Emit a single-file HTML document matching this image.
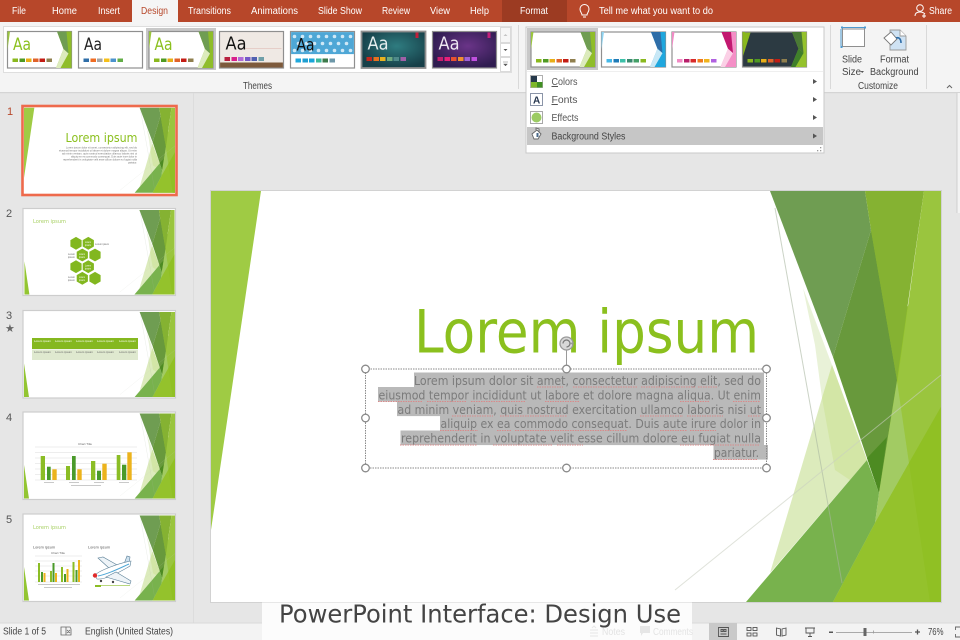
<!DOCTYPE html>
<html><head><meta charset="utf-8"><title>PowerPoint Interface: Design Use</title>
<style>
html,body{margin:0;padding:0;background:#e6e6e6;width:960px;height:640px;overflow:hidden}
svg{display:block}
text{font-family:"Liberation Sans",sans-serif;font-size:10px;fill:#444}
.w{fill:#fff}
.d{font-family:"DejaVu Sans","Liberation Sans",sans-serif}
.b text{font-family:"DejaVu Sans","Liberation Sans",sans-serif;font-size:12px;fill:#7b7b7b}
.sq{fill:none;stroke:#d98a8a;stroke-width:1;stroke-dasharray:1.5 1}
.m{font-size:10px;fill:#555}
</style></head><body>
<svg width="960" height="640" viewBox="0 0 960 640" xmlns="http://www.w3.org/2000/svg">
<defs>
<radialGradient id="teal" cx=".55" cy=".4" r=".6"><stop offset="0" stop-color="#2f7c80"/><stop offset="1" stop-color="#163f48"/></radialGradient>
<radialGradient id="purp" cx=".55" cy=".4" r=".6"><stop offset="0" stop-color="#6a3488"/><stop offset="1" stop-color="#2f1c50"/></radialGradient>
<g id="decor">
<polygon points="871,230 941,375 941,602 833,602 875,523 880,497" fill="#94c22c"/>
<polygon points="803,288 832,365 822,398 815,345" fill="#e9f2d8"/>
<polygon points="832,365 867,460 770,573 822,398" fill="#dcebbc"/>
<polygon points="822,398 832,365 867,460 850,480 835,470" fill="#d3e6a6"/>
<polygon points="770,191 865,191 871,230 833,357" fill="#6f9d52"/>
<polygon points="871,230 897,380 879,493 867,458 833,357" fill="#68993c"/>
<polygon points="867,458 887,437 879,493" fill="#4d8b22"/>
<polygon points="865,191 924,191 897,380 871,230" fill="#85b232"/>
<polygon points="924,191 941,191 941,375 897,385" fill="#9ac53e"/>
<polygon points="941,375 941,407 909,463 897,383" fill="#9ac53e"/>
<polygon points="897,381 909,463 875,523 879,493" fill="#a2cb63"/>
<polygon points="746,602 867,460 879,493 875,523 833,602" fill="#78b24d"/>
<polygon points="833,602 875,523 909,463 941,407 941,602" fill="#94c22c"/>
<polygon points="909,463 941,407 941,602 930,602" fill="#90c024"/>
<line x1="775" y1="208" x2="842" y2="583" stroke="#a9b5a0" stroke-opacity=".6" stroke-width="1"/>
<line x1="675" y1="590" x2="941" y2="375" stroke="#c9cfc2" stroke-opacity=".6" stroke-width="1"/>
</g>
<g id="tail"><polygon points="211,440 211,602 235,602" fill="#93c532"/></g>
<g id="thchev">
<polygon points="0,0 2.500,0 0,18" style="fill:var(--a)"/>
<polygon points="49.500,0 64,0 64,36.500 48.500,36.500 56,17.500" style="fill:var(--b)"/>
<polygon points="49.500,0 59,0 61,22 56,17.500" style="fill:var(--c)"/>
<polygon points="56,17.500 61,22 53,36.500 48.500,36.500" style="fill:var(--d)"/>
</g>
<polygon id="hex" points="0,-6.400 5.600,-3.200 5.600,3.200 0,6.400 -5.600,3.200 -5.600,-3.200" fill="#82b71f"/>
</defs>

<rect width="960" height="640" fill="#e6e6e6"/>

<!-- title bar -->
<rect width="960" height="22" fill="#b7472a"/>
<rect x="502" width="65" height="22" fill="#9c3b22"/>
<rect x="132" width="46" height="23" fill="#f5f5f5"/>
<text class="w" x="12" y="14" textLength="14" lengthAdjust="spacingAndGlyphs">File</text>
<text class="w" x="52" y="14" textLength="25" lengthAdjust="spacingAndGlyphs">Home</text>
<text class="w" x="98" y="14" textLength="22" lengthAdjust="spacingAndGlyphs">Insert</text>
<text x="141" y="14" textLength="27" lengthAdjust="spacingAndGlyphs" style="fill:#b7472a">Design</text>
<text class="w" x="188" y="14" textLength="43" lengthAdjust="spacingAndGlyphs">Transitions</text>
<text class="w" x="251" y="14" textLength="47" lengthAdjust="spacingAndGlyphs">Animations</text>
<text class="w" x="318" y="14" textLength="44" lengthAdjust="spacingAndGlyphs">Slide Show</text>
<text class="w" x="382" y="14" textLength="28" lengthAdjust="spacingAndGlyphs">Review</text>
<text class="w" x="430" y="14" textLength="20" lengthAdjust="spacingAndGlyphs">View</text>
<text class="w" x="470" y="14" textLength="19" lengthAdjust="spacingAndGlyphs">Help</text>
<text class="w" x="520" y="14" textLength="28" lengthAdjust="spacingAndGlyphs">Format</text>
<path d="M582 15c0-2-2-3-2-6a4.500 4.500 0 0 1 9 0c0 3-2 4-2 6zM583 17h3" fill="none" stroke="#fff" stroke-width="1"/>
<text class="w" x="599" y="14" textLength="114" lengthAdjust="spacingAndGlyphs">Tell me what you want to do</text>
<circle cx="920" cy="8" r="3.300" fill="none" stroke="#fff"/>
<path d="M915 16c0-3 2-4 5-4s4 1 5 2M924 14v4M922 16h4" fill="none" stroke="#fff"/>
<text class="w" x="929" y="14" textLength="23" lengthAdjust="spacingAndGlyphs">Share</text>

<!-- ribbon -->
<rect y="22" width="960" height="71" fill="#f4f4f4"/>
<rect x="132" y="21" width="46" height="3" fill="#f5f5f5"/>
<rect y="92" width="960" height="1.200" fill="#d4d4d4"/>
<rect x="3.500" y="26.500" width="508" height="46" fill="#fff" stroke="#dedede"/>
<rect x="146" y="28" width="70" height="42" fill="#c8c8c8"/>
<g stroke="#dadada" fill="#f6f6f6"><rect x="500.500" y="27.500" width="10" height="15"/><rect x="500.500" y="43.500" width="10" height="13" fill="#fff"/><rect x="500.500" y="57.500" width="10" height="14" fill="#fff"/></g>
<path d="M503.500 36l2-2 2 2z" fill="#c4c4c4"/><path d="M503.500 49h4l-2 2z" fill="#555"/><path d="M503 62h5M503.500 64h4l-2 2z" fill="#555" stroke="#777" stroke-width=".5"/>

<!-- theme 1 -->
<g transform="translate(7.500 31.500)" style="--a:#9ac53e;--b:#8fbd2a;--c:#6f9d52;--d:#dcebbc">
<rect width="64" height="36.500" fill="#fff" stroke="#8f8f8f" stroke-width="1.200"/><use href="#thchev"/>
<text x="5.500" y="18.500" class="d" textLength="18" lengthAdjust="spacingAndGlyphs" style="font-size:17px;fill:#8bc01e">Aa</text>
<g><rect x="5" y="27" width="5.500" height="3.500" fill="#8ab81e"/><rect x="12" y="27" width="5.500" height="3.500" fill="#4f9a22"/><rect x="18.500" y="27" width="5.500" height="3.500" fill="#e8ae17"/><rect x="25.500" y="27" width="5.500" height="3.500" fill="#e0622a"/><rect x="32" y="27" width="5.500" height="3.500" fill="#c31c14"/><rect x="39" y="27" width="5.500" height="3.500" fill="#8f7f4e"/></g></g>
<!-- theme 2 -->
<g transform="translate(78.500 31.500)">
<rect width="64" height="36.500" fill="#fff" stroke="#8f8f8f" stroke-width="1.200"/>
<text x="5.500" y="18.500" class="d" textLength="18" lengthAdjust="spacingAndGlyphs" style="font-size:17px;fill:#222">Aa</text>
<rect x="5" y="27" width="5.500" height="3.500" fill="#2f6ea8"/><rect x="12" y="27" width="5.500" height="3.500" fill="#ef6c23"/><rect x="18.500" y="27" width="5.500" height="3.500" fill="#a5a5a5"/><rect x="25.500" y="27" width="5.500" height="3.500" fill="#f5bf1a"/><rect x="32" y="27" width="5.500" height="3.500" fill="#4b93cd"/><rect x="39" y="27" width="5.500" height="3.500" fill="#63ae47"/></g>
<!-- theme 3 -->
<g transform="translate(149 31.500)" style="--a:#9ac53e;--b:#8fbd2a;--c:#6f9d52;--d:#dcebbc">
<rect width="64" height="36.500" fill="#fff" stroke="#8f8f8f" stroke-width="1.200"/><use href="#thchev"/>
<text x="5.500" y="18.500" class="d" textLength="18" lengthAdjust="spacingAndGlyphs" style="font-size:17px;fill:#8bc01e">Aa</text>
<rect x="5" y="27" width="5.500" height="3.500" fill="#8ab81e"/><rect x="12" y="27" width="5.500" height="3.500" fill="#4f9a22"/><rect x="18.500" y="27" width="5.500" height="3.500" fill="#e8ae17"/><rect x="25.500" y="27" width="5.500" height="3.500" fill="#e0622a"/><rect x="32" y="27" width="5.500" height="3.500" fill="#c31c14"/><rect x="39" y="27" width="5.500" height="3.500" fill="#8f7f4e"/></g>
<!-- theme 4 -->
<g transform="translate(219.500 31.500)">
<rect width="64" height="36.500" fill="#efe9e4" stroke="#8f8f8f" stroke-width="1.200"/>
<rect x=".6" y="31" width="62.800" height="5" fill="#7d5a3c"/>
<line x1="24" y1="17" x2="62" y2="17" stroke="#e3c4bf" stroke-width=".7"/>
<text x="6" y="18" class="d" textLength="21" lengthAdjust="spacingAndGlyphs" style="font-size:18px;fill:#111">Aa</text>
<rect x="5" y="25.500" width="5.500" height="4" fill="#b81f3e"/><rect x="12" y="25.500" width="5.500" height="4" fill="#d91f8a"/><rect x="18.500" y="25.500" width="5.500" height="4" fill="#b06ad8"/><rect x="25.500" y="25.500" width="5.500" height="4" fill="#7458c8"/><rect x="32" y="25.500" width="5.500" height="4" fill="#5060b0"/><rect x="39" y="25.500" width="5.500" height="4" fill="#6f9fa8"/></g>
<!-- theme 5 -->
<g transform="translate(290.500 31.500)">
<rect width="64" height="36.500" fill="#fff" stroke="#8f8f8f" stroke-width="1.200"/>
<rect x=".6" y=".6" width="62.800" height="22" fill="#4ea7d6"/>
<g fill="#cfe8f6"><circle cx="4" cy="5" r="1.800"/><circle cx="12" cy="5" r="1.800"/><circle cx="20" cy="5" r="1.800"/><circle cx="28" cy="5" r="1.800"/><circle cx="36" cy="5" r="1.800"/><circle cx="44" cy="5" r="1.800"/><circle cx="52" cy="5" r="1.800"/><circle cx="60" cy="5" r="1.800"/><circle cx="8" cy="12" r="1.800"/><circle cx="16" cy="12" r="1.800"/><circle cx="24" cy="12" r="1.800"/><circle cx="32" cy="12" r="1.800"/><circle cx="40" cy="12" r="1.800"/><circle cx="48" cy="12" r="1.800"/><circle cx="56" cy="12" r="1.800"/><circle cx="4" cy="19" r="1.800"/><circle cx="12" cy="19" r="1.800"/><circle cx="20" cy="19" r="1.800"/><circle cx="28" cy="19" r="1.800"/><circle cx="36" cy="19" r="1.800"/><circle cx="44" cy="19" r="1.800"/><circle cx="52" cy="19" r="1.800"/><circle cx="60" cy="19" r="1.800"/></g>
<text x="6" y="19" class="d" textLength="18" lengthAdjust="spacingAndGlyphs" style="font-size:17px;fill:#111">Aa</text>
<rect x="5" y="27" width="5.500" height="4" fill="#1fa8dc"/><rect x="12" y="27" width="5.500" height="4" fill="#1f9ed0"/><rect x="18.500" y="27" width="5.500" height="4" fill="#19a5d9"/><rect x="25.500" y="27" width="5.500" height="4" fill="#3cb89a"/><rect x="32" y="27" width="5.500" height="4" fill="#3d7a4a"/><rect x="39" y="27" width="5.500" height="4" fill="#6d97a8"/></g>
<!-- theme 6 -->
<g transform="translate(361.500 31.500)">
<rect width="64" height="36.500" fill="url(#teal)" stroke="#8f8f8f" stroke-width="1.800"/>
<rect x="54" y="1" width="3" height="5.500" fill="#c21f3a"/>
<text x="6" y="18" class="d" textLength="21" lengthAdjust="spacingAndGlyphs" style="font-size:18px;fill:#e6eeee">Aa</text>
<rect x="5" y="25.500" width="5.500" height="4" fill="#c4281e"/><rect x="12" y="25.500" width="5.500" height="4" fill="#e8701e"/><rect x="18.500" y="25.500" width="5.500" height="4" fill="#e8b21e"/><rect x="25.500" y="25.500" width="5.500" height="4" fill="#6faa80"/><rect x="32" y="25.500" width="5.500" height="4" fill="#4f8a8a"/><rect x="39" y="25.500" width="5.500" height="4" fill="#a060a8"/></g>
<!-- theme 7 -->
<g transform="translate(432.500 31.500)">
<rect width="64" height="36.500" fill="url(#purp)" stroke="#8f8f8f" stroke-width="1.200"/>
<rect x="55" y="1" width="3" height="5.500" fill="#c2207a"/>
<text x="6" y="18" class="d" textLength="21" lengthAdjust="spacingAndGlyphs" style="font-size:18px;fill:#eee8f2">Aa</text>
<rect x="5" y="25.500" width="5.500" height="4" fill="#c61f6e"/><rect x="12" y="25.500" width="5.500" height="4" fill="#e81f7a"/><rect x="18.500" y="25.500" width="5.500" height="4" fill="#e85030"/><rect x="25.500" y="25.500" width="5.500" height="4" fill="#f09030"/><rect x="32" y="25.500" width="5.500" height="4" fill="#a060d8"/><rect x="39" y="25.500" width="5.500" height="4" fill="#c050e0"/></g>
<text x="243" y="89" textLength="29" lengthAdjust="spacingAndGlyphs" style="fill:#444">Themes</text>

<rect x="518" y="25" width="1" height="64" fill="#d9d9d9"/>
<rect x="830" y="25" width="1" height="64" fill="#d9d9d9"/>
<rect x="926" y="25" width="1" height="64" fill="#d9d9d9"/>

<!-- dropdown panel -->
<rect x="526" y="27" width="298" height="126" fill="#fff" stroke="#c9c9c9"/>
<rect x="527" y="28" width="71" height="42" fill="#c8c8c8"/>
<rect x="527" y="71" width="296" height="1" fill="#efefef"/>
<g transform="translate(531 32)" style="--a:#9ac53e;--b:#8fbd2a;--c:#6f9d52;--d:#dcebbc">
<rect width="64" height="35" fill="#fff" stroke="#8f8f8f" stroke-width="1.200"/><use href="#thchev" transform="scale(1 .96)"/>
<rect x="5" y="27" width="5.500" height="3.500" fill="#8ab81e"/><rect x="12" y="27" width="5.500" height="3.500" fill="#4f9a22"/><rect x="18.500" y="27" width="5.500" height="3.500" fill="#e8ae17"/><rect x="25.500" y="27" width="5.500" height="3.500" fill="#e0622a"/><rect x="32" y="27" width="5.500" height="3.500" fill="#c31c14"/><rect x="39" y="27" width="5.500" height="3.500" fill="#8f7f4e"/></g>
<g transform="translate(601.500 32)" style="--a:#8fd3f0;--b:#1fa7de;--c:#2f6ea8;--d:#c8e8f6">
<rect width="64" height="35" fill="#fff" stroke="#8f8f8f" stroke-width="1.200"/><use href="#thchev" transform="scale(1 .96)"/>
<rect x="5" y="27" width="5.500" height="3.500" fill="#45b8e8"/><rect x="12" y="27" width="5.500" height="3.500" fill="#1f7cb8"/><rect x="18.500" y="27" width="5.500" height="3.500" fill="#3cc0a8"/><rect x="25.500" y="27" width="5.500" height="3.500" fill="#3a8a70"/><rect x="32" y="27" width="5.500" height="3.500" fill="#45a068"/><rect x="39" y="27" width="5.500" height="3.500" fill="#8ab81e"/></g>
<g transform="translate(672 32)" style="--a:#f08ac4;--b:#f48fc6;--c:#c2186f;--d:#fbd0e6">
<rect width="64" height="35" fill="#fff" stroke="#8f8f8f" stroke-width="1.200"/><use href="#thchev" transform="scale(1 .96)"/>
<rect x="5" y="27" width="5.500" height="3.500" fill="#f28ac4"/><rect x="12" y="27" width="5.500" height="3.500" fill="#b81f6a"/><rect x="18.500" y="27" width="5.500" height="3.500" fill="#d92a2a"/><rect x="25.500" y="27" width="5.500" height="3.500" fill="#f07a1e"/><rect x="32" y="27" width="5.500" height="3.500" fill="#f0b41e"/><rect x="39" y="27" width="5.500" height="3.500" fill="#b060e0"/></g>
<g transform="translate(742.500 32)" style="--a:#8ab81e;--b:#94c22c;--c:#4a7a35;--d:#3f7f2a">
<rect width="64" height="35" fill="#2c3a42" stroke="#8f8f8f" stroke-width="1.200"/><polygon points=".6,.6 8,.6 .6,24" fill="#8ab81e"/><use href="#thchev" transform="scale(1 .96)"/>
<rect x="5" y="27" width="5.500" height="3.500" fill="#8ab81e"/><rect x="12" y="27" width="5.500" height="3.500" fill="#4f9a22"/><rect x="18.500" y="27" width="5.500" height="3.500" fill="#e8ae17"/><rect x="25.500" y="27" width="5.500" height="3.500" fill="#e0622a"/><rect x="32" y="27" width="5.500" height="3.500" fill="#c31c14"/><rect x="39" y="27" width="5.500" height="3.500" fill="#8f7f4e"/></g>
<rect x="527" y="127" width="296" height="18" fill="#c6c6c6"/>
<text class="m" x="551.500" y="85" textLength="26" lengthAdjust="spacingAndGlyphs"><tspan text-decoration="underline">C</tspan>olors</text>
<text class="m" x="551.500" y="103" textLength="26" lengthAdjust="spacingAndGlyphs"><tspan text-decoration="underline">F</tspan>onts</text>
<text class="m" x="551.500" y="121" textLength="27" lengthAdjust="spacingAndGlyphs">Effects</text>
<text class="m" x="551.500" y="139.500" textLength="74" lengthAdjust="spacingAndGlyphs" style="fill:#444">Background Styles</text>
<g fill="#555"><path d="M813 79l4 2.500-4 2.500z"/><path d="M813 97l4 2.500-4 2.500z"/><path d="M813 115l4 2.500-4 2.500z"/><path d="M813 133.500l4 2.500-4 2.500z"/></g>
<g fill="#999"><rect x="820" y="147" width="1.300" height="1.300"/><rect x="820" y="150" width="1.300" height="1.300"/><rect x="817" y="150" width="1.300" height="1.300"/></g>
<!-- menu icons -->
<rect x="530.500" y="75.500" width="12" height="12" fill="#fff" stroke="#b0b0b0"/>
<rect x="531" y="76" width="6" height="6" fill="#25384a"/><rect x="531" y="82" width="6" height="5.500" fill="#7fb82a"/><rect x="537" y="82" width="5.500" height="5.500" fill="#3f8f22"/>
<rect x="530.500" y="93.500" width="12" height="12" fill="#fff" stroke="#8b95a8"/>
<text x="533" y="103.500" style="font-size:10px;font-weight:bold;fill:#26364e">A</text>
<rect x="530.500" y="111.500" width="12" height="12" fill="#fff" stroke="#a8a8a8"/>
<circle cx="536.500" cy="117.500" r="5" fill="#9ccb63"/>
<path d="M532 134l5-4 4 4-3 5h-4zM536 130v-2l3 1v3" fill="#fff" stroke="#666" stroke-width=".9"/><rect x="536.500" y="133" width="2" height="4" fill="#4a6a8a"/>

<!-- customize -->
<rect x="842.500" y="29" width="22" height="17.500" fill="#fff" stroke="#8f8f8f"/>
<path d="M842 27.500h23M841 29v18" stroke="#4d9ad0" stroke-width="1" fill="none"/>
<g fill="#4d9ad0"><rect x="841" y="26.500" width="2" height="2"/><rect x="864" y="26.500" width="2" height="2"/><rect x="840.500" y="46" width="2" height="2"/></g>
<text x="842" y="62.500" textLength="20" lengthAdjust="spacingAndGlyphs">Slide</text>
<text x="842" y="75" textLength="19" lengthAdjust="spacingAndGlyphs">Size</text>
<path d="M860.500 71h3.500l-1.800 2z" fill="#555"/>
<path d="M890 30h10l6 6v14h-16z" fill="#cfe2f3" stroke="#9a9a9a" stroke-width=".9"/><path d="M900 30v6h6" fill="#fff" stroke="#9a9a9a" stroke-width=".9"/>
<path d="M884 38l7-6 6 7-6 6z" fill="#fff" stroke="#777" stroke-width=".9"/>
<path d="M896 38c3-1 5 1 5 5" fill="none" stroke="#2f6ea8" stroke-width="1.600"/>
<text x="880" y="62.500" textLength="29" lengthAdjust="spacingAndGlyphs">Format</text>
<text x="870" y="75" textLength="48.500" lengthAdjust="spacingAndGlyphs">Background</text>
<text x="858" y="89" textLength="40" lengthAdjust="spacingAndGlyphs">Customize</text>
<path d="M947 88l2.500-2.500 2.500 2.500" fill="none" stroke="#666"/>

<!-- panes -->
<rect x="193" y="93" width="1" height="530" fill="#dcdcdc"/>
<rect x="957" y="93" width="3" height="120" fill="#f4f4f4"/>
<rect x="956.500" y="93" width="1" height="120" fill="#cfcfcf"/>

<!-- main slide -->
<rect x="210.500" y="190.500" width="731" height="412" fill="#fff" stroke="#d2d2d2"/>
<use href="#decor"/>
<polygon points="211,191 261,191 211,530" fill="#9fcb44"/>
<text class="d" x="414" y="352.500" textLength="345" lengthAdjust="spacingAndGlyphs" style="font-size:60px;fill:#8bc01e">Lorem ipsum</text>

<g fill="#b9b9b9">
<rect x="414" y="372.500" width="350" height="14.800"/>
<rect x="378" y="387" width="386" height="14.600"/>
<rect x="397" y="401.500" width="367" height="14.600"/>
<rect x="440" y="416" width="324" height="14.600"/>
<rect x="400.500" y="430.500" width="363.500" height="14.600"/>
<rect x="713.500" y="445" width="54.500" height="14.600"/>
</g>
<g class="b">
<text x="414" y="385" textLength="347" lengthAdjust="spacingAndGlyphs">Lorem ipsum dolor sit amet, consectetur adipiscing elit, sed do</text>
<text x="378.500" y="399.400" textLength="382.500" lengthAdjust="spacingAndGlyphs">eiusmod tempor incididunt ut labore et dolore magna aliqua. Ut enim</text>
<text x="397.500" y="413.800" textLength="363.500" lengthAdjust="spacingAndGlyphs">ad minim veniam, quis nostrud exercitation ullamco laboris nisi ut</text>
<text x="440.500" y="428.200" textLength="320.500" lengthAdjust="spacingAndGlyphs">aliquip ex ea commodo consequat. Duis aute irure dolor in</text>
<text x="401" y="442.600" textLength="360" lengthAdjust="spacingAndGlyphs">reprehenderit in voluptate velit esse cillum dolore eu fugiat nulla</text>
<text x="714" y="457" textLength="45" lengthAdjust="spacingAndGlyphs">pariatur.</text>
</g>
<path class="sq" d="M537 387h26M573 387h64M641 387h54M698 387h19M378 401.500h45M427 401.500h40M471 401.500h54M545 401.500h35M680 401.500h30M733 401.500h27M452 416h41M500 416h67M640 416h43M687 416h36M748 416h12M440 430.500h38M497 430.500h15M515 430.500h112M660 430.500h27M690 430.500h26M400 445h77M493 445h60M557 445h26M680 445h80M713 459.500h45"/>

<rect x="365.500" y="369" width="401" height="99" fill="none" stroke="#8a8a8a" stroke-width="1" stroke-dasharray="1.500 1"/>
<line x1="566.500" y1="350" x2="566.500" y2="369" stroke="#9a9a9a"/>
<circle cx="566.500" cy="343.500" r="6.500" fill="#d8d8d8" stroke="#9a9a9a" stroke-width="1.300"/>
<path d="M563 343.500a3.500 3.500 0 1 1 3.500 3.500" fill="none" stroke="#777" stroke-width="1.200"/><path d="M570 343l4-1-1.500 3z" fill="#999"/>
<g fill="#fff" stroke="#8a8a8a" stroke-width="1.300">
<circle cx="365.500" cy="369" r="3.800"/><circle cx="566.500" cy="369" r="3.800"/><circle cx="766.500" cy="369" r="3.800"/>
<circle cx="365.500" cy="418" r="3.800"/><circle cx="766.500" cy="418" r="3.800"/>
<circle cx="365.500" cy="468" r="3.800"/><circle cx="566.500" cy="468" r="3.800"/><circle cx="766.500" cy="468" r="3.800"/>
</g>

<!-- thumbnails -->
<text x="7" y="115" style="font-size:11px;fill:#b7472a">1</text>
<text x="6" y="217" style="font-size:11px;fill:#555">2</text>
<text x="6" y="319" style="font-size:11px;fill:#555">3</text>
<text x="5" y="332" style="font-size:11px;fill:#666">★</text>
<text x="6" y="421" style="font-size:11px;fill:#555">4</text>
<text x="6" y="523" style="font-size:11px;fill:#555">5</text>

<rect x="22.500" y="106" width="154" height="89" fill="#fff" stroke="#ee6a4c" stroke-width="2.600"/>
<svg x="24" y="107.500" width="151" height="85.500" viewBox="211 191 730 411"><use href="#decor"/><polygon points="211,191 261,191 211,530" fill="#9fcb44"/></svg>
<text class="d" x="65.500" y="142" textLength="72" lengthAdjust="spacingAndGlyphs" style="font-size:12.500px;fill:#8bc01e">Lorem ipsum</text>
<g class="d">
<text x="66" y="148.500" textLength="71" lengthAdjust="spacingAndGlyphs" style="font-size:2.600px;fill:#777">Lorem ipsum dolor sit amet, consectetur adipiscing elit, sed do</text>
<text x="59" y="151.500" textLength="78" lengthAdjust="spacingAndGlyphs" style="font-size:2.600px;fill:#777">eiusmod tempor incididunt ut labore et dolore magna aliqua. Ut enim</text>
<text x="62" y="154.500" textLength="75" lengthAdjust="spacingAndGlyphs" style="font-size:2.600px;fill:#777">ad minim veniam, quis nostrud exercitation ullamco laboris nisi ut</text>
<text x="71" y="157.500" textLength="66" lengthAdjust="spacingAndGlyphs" style="font-size:2.600px;fill:#777">aliquip ex ea commodo consequat. Duis aute irure dolor in</text>
<text x="63" y="160.500" textLength="74" lengthAdjust="spacingAndGlyphs" style="font-size:2.600px;fill:#777">reprehenderit in voluptate velit esse cillum dolore eu fugiat nulla</text>
<text x="128" y="163.500" textLength="9" lengthAdjust="spacingAndGlyphs" style="font-size:2.600px;fill:#777">pariatur.</text>
</g>

<!-- thumb 2 -->
<rect x="23" y="208.500" width="152.500" height="87" fill="#fff" stroke="#cdcdcd" stroke-width="1.200"/>
<svg x="24" y="210" width="151" height="84.500" viewBox="211 191 730 411"><use href="#decor"/><use href="#tail"/></svg>
<text class="d" x="33" y="223" textLength="33" lengthAdjust="spacingAndGlyphs" style="font-size:5.500px;fill:#a8d064">Lorem ipsum</text>
<use href="#hex" x="76" y="243.300"/><use href="#hex" x="88.300" y="243.300"/><use href="#hex" x="82.300" y="255"/><use href="#hex" x="95" y="255"/><use href="#hex" x="76" y="266.700"/><use href="#hex" x="88.300" y="266.700"/><use href="#hex" x="82.300" y="278.300"/><use href="#hex" x="95" y="278.300"/>
<text x="85" y="243" textLength="6" lengthAdjust="spacingAndGlyphs" style="font-size:2.500px;fill:#fff">Lorem</text>
<text x="85" y="246" textLength="6" lengthAdjust="spacingAndGlyphs" style="font-size:2.500px;fill:#fff">ipsum</text>
<text x="79" y="255" textLength="6" lengthAdjust="spacingAndGlyphs" style="font-size:2.500px;fill:#fff">Lorem</text>
<text x="79" y="258" textLength="6" lengthAdjust="spacingAndGlyphs" style="font-size:2.500px;fill:#fff">ipsum</text>
<text x="85" y="266.500" textLength="6" lengthAdjust="spacingAndGlyphs" style="font-size:2.500px;fill:#fff">Lorem</text>
<text x="85" y="269.500" textLength="6" lengthAdjust="spacingAndGlyphs" style="font-size:2.500px;fill:#fff">ipsum</text>
<text x="79" y="278" textLength="6" lengthAdjust="spacingAndGlyphs" style="font-size:2.500px;fill:#fff">Lorem</text>
<text x="79" y="281" textLength="6" lengthAdjust="spacingAndGlyphs" style="font-size:2.500px;fill:#fff">ipsum</text>
<text x="95" y="245" textLength="14" lengthAdjust="spacingAndGlyphs" style="font-size:3px;fill:#666">Lorem ipsum</text>
<text x="68" y="255" textLength="7" lengthAdjust="spacingAndGlyphs" style="font-size:3px;fill:#666">Lorem</text>
<text x="68" y="258" textLength="7" lengthAdjust="spacingAndGlyphs" style="font-size:3px;fill:#666">ipsum</text>
<text x="68" y="278" textLength="7" lengthAdjust="spacingAndGlyphs" style="font-size:3px;fill:#666">Lorem</text>
<text x="68" y="281" textLength="7" lengthAdjust="spacingAndGlyphs" style="font-size:3px;fill:#666">ipsum</text>

<!-- thumb 3 -->
<rect x="23" y="310.500" width="152.500" height="87.500" fill="#fff" stroke="#cdcdcd" stroke-width="1.200"/>
<svg x="24" y="312" width="151" height="85" viewBox="211 191 730 411"><use href="#decor"/><use href="#tail"/></svg>
<rect x="32" y="338" width="106" height="11" fill="#85b81f"/>
<rect x="32" y="349.500" width="106" height="10.500" fill="#dfe9cf"/>
<text x="34" y="342" textLength="17" lengthAdjust="spacingAndGlyphs" style="font-size:3px;fill:#fff">Lorem ipsum</text><text x="55" y="342" textLength="17" lengthAdjust="spacingAndGlyphs" style="font-size:3px;fill:#fff">Lorem ipsum</text><text x="76" y="342" textLength="17" lengthAdjust="spacingAndGlyphs" style="font-size:3px;fill:#fff">Lorem ipsum</text><text x="97" y="342" textLength="17" lengthAdjust="spacingAndGlyphs" style="font-size:3px;fill:#fff">Lorem ipsum</text><text x="119" y="342" textLength="17" lengthAdjust="spacingAndGlyphs" style="font-size:3px;fill:#fff">Lorem ipsum</text>
<text x="34" y="353" textLength="17" lengthAdjust="spacingAndGlyphs" style="font-size:3px;fill:#666">Lorem ipsum</text><text x="55" y="353" textLength="17" lengthAdjust="spacingAndGlyphs" style="font-size:3px;fill:#666">Lorem ipsum</text><text x="76" y="353" textLength="17" lengthAdjust="spacingAndGlyphs" style="font-size:3px;fill:#666">Lorem ipsum</text><text x="97" y="353" textLength="17" lengthAdjust="spacingAndGlyphs" style="font-size:3px;fill:#666">Lorem ipsum</text><text x="119" y="353" textLength="17" lengthAdjust="spacingAndGlyphs" style="font-size:3px;fill:#666">Lorem ipsum</text>

<!-- thumb 4 -->
<rect x="23" y="412" width="152.500" height="87.500" fill="#fff" stroke="#cdcdcd" stroke-width="1.200"/>
<svg x="24" y="413.500" width="151" height="85" viewBox="211 191 730 411"><use href="#decor"/><use href="#tail"/></svg>
<text x="78" y="445" textLength="14" lengthAdjust="spacingAndGlyphs" style="font-size:3px;fill:#666">Chart Title</text>
<g stroke="#dcdcdc" stroke-width=".6"><line x1="35" y1="447" x2="137" y2="447"/><line x1="35" y1="452.500" x2="137" y2="452.500"/><line x1="35" y1="458" x2="137" y2="458"/><line x1="35" y1="463.500" x2="137" y2="463.500"/><line x1="35" y1="469" x2="137" y2="469"/><line x1="35" y1="474.500" x2="137" y2="474.500"/><line x1="35" y1="480" x2="137" y2="480"/></g>
<g fill="#8bbd25"><rect x="40.700" y="456" width="4.300" height="24"/><rect x="66" y="466" width="4" height="14"/><rect x="91" y="461" width="4.300" height="19"/><rect x="116.700" y="455" width="3.700" height="25"/></g>
<g fill="#4a9a2a"><rect x="47" y="466.700" width="3.700" height="13.300"/><rect x="72" y="456" width="3.700" height="24"/><rect x="97" y="470.700" width="4" height="9.300"/><rect x="122" y="464.700" width="4.300" height="15.300"/></g>
<g fill="#ecb31c"><rect x="52.300" y="469.300" width="4.400" height="10.700"/><rect x="77.300" y="469.300" width="4.400" height="10.700"/><rect x="102.300" y="463.700" width="4.400" height="16.300"/><rect x="127.300" y="452.300" width="4.400" height="27.700"/></g>
<g fill="#c9c9c9"><rect x="44" y="482" width="10" height="1"/><rect x="69" y="482" width="10" height="1"/><rect x="94" y="482" width="10" height="1"/><rect x="119" y="482" width="10" height="1"/><rect x="71" y="485" width="30" height="1"/></g>

<!-- thumb 5 -->
<rect x="23" y="514" width="152.500" height="87.500" fill="#fff" stroke="#cdcdcd" stroke-width="1.200"/>
<svg x="24" y="515.500" width="151" height="85" viewBox="211 191 730 411"><use href="#decor"/><use href="#tail"/></svg>
<text class="d" x="33" y="529" textLength="33" lengthAdjust="spacingAndGlyphs" style="font-size:5.500px;fill:#a8d064">Lorem ipsum</text>
<text x="33" y="548.500" textLength="22" lengthAdjust="spacingAndGlyphs" style="font-size:4px;fill:#555">Lorem ipsum</text>
<text x="88" y="548.500" textLength="22" lengthAdjust="spacingAndGlyphs" style="font-size:4px;fill:#555">Lorem ipsum</text>
<text x="51" y="554" textLength="14" lengthAdjust="spacingAndGlyphs" style="font-size:3px;fill:#666">Chart Title</text>
<g stroke="#dcdcdc" stroke-width=".6"><line x1="35" y1="556" x2="82" y2="556"/><line x1="35" y1="561" x2="82" y2="561"/><line x1="35" y1="566" x2="82" y2="566"/><line x1="35" y1="571" x2="82" y2="571"/><line x1="35" y1="576" x2="82" y2="576"/><line x1="35" y1="582" x2="82" y2="582"/></g>
<g fill="#8bbd25"><rect x="38" y="563" width="2" height="19"/><rect x="50" y="571" width="2" height="11"/><rect x="61" y="567" width="2" height="15"/><rect x="72.500" y="562" width="2" height="20"/></g>
<g fill="#4a9a2a"><rect x="41" y="572" width="2" height="10"/><rect x="52.500" y="563" width="2" height="19"/><rect x="64" y="574" width="2" height="8"/><rect x="75.500" y="570" width="2" height="12"/></g>
<g fill="#ecb31c"><rect x="43.500" y="573" width="2" height="9"/><rect x="55" y="573" width="2" height="9"/><rect x="66.500" y="569" width="2" height="13"/><rect x="78" y="560" width="2" height="22"/></g>
<g fill="#c9c9c9"><rect x="38" y="584" width="42" height="1"/><rect x="44" y="587" width="28" height="1"/></g>
<!-- plane -->
<g stroke="#5a7f96" stroke-width=".6" fill="#eef4f8">
<path d="M110 569L98 558l5-1 16 9z"/>
<path d="M124 564l3-8 3 1-1 7z" fill="#cfe2f0"/>
<path d="M95 575C100 570 120 563 131 561l-1 5C120 572 105 580 97 579z" fill="#fff"/>
<path d="M106 577l24 7 1-3-15-9z"/>
</g>
<path d="M98 576c10-2 20-7 31-12" fill="none" stroke="#4ea7d6" stroke-width="1"/>
<circle cx="95" cy="575.500" r="2.200" fill="#e02a2a"/><circle cx="101" cy="581" r="1.200" fill="#444"/><circle cx="113" cy="582" r="1.200" fill="#444"/>
<rect x="95" y="585" width="35" height="1" fill="#b9d77f"/><rect x="95" y="585" width="6" height="2" fill="#8bbd25"/>

<!-- status bar -->
<rect y="623" width="960" height="17" fill="#f3f3f3"/>
<rect y="622.500" width="960" height="1" fill="#d9d9d9"/>
<text x="3" y="634.500" textLength="43" lengthAdjust="spacingAndGlyphs">Slide 1 of 5</text>
<path d="M61 627h5v8h-5zM66 627h4l1 2v6h-5M67 630l3 3M70 630l-3 3" fill="none" stroke="#666" stroke-width=".8"/>
<text x="85" y="634.500" textLength="88" lengthAdjust="spacingAndGlyphs">English (United States)</text>
<rect x="709" y="623" width="28" height="17" fill="#c9c9c9"/>
<path d="M718.500 627.500h10v9h-10zM720.500 634h6M721 629.500h2v2h-2zM724 629.500h2v2h-2z" fill="none" stroke="#555" stroke-width=".9"/>
<g fill="none" stroke="#555" stroke-width=".9"><rect x="747" y="627.500" width="4" height="3"/><rect x="753" y="627.500" width="4" height="3"/><rect x="747" y="633" width="4" height="3"/><rect x="753" y="633" width="4" height="3"/><path d="M776.500 628l4 1v7l-4-1zM786 628l-4 1v7l4-1z"/><path d="M805 628h10M806 628v5h8v-5M810 633v3M808 636.500h4"/></g>
<rect x="829" y="631.500" width="4" height="1.500" fill="#555"/>
<rect x="836" y="632" width="76" height=".8" fill="#999"/>
<rect x="863.500" y="628" width="3" height="8" fill="#666"/>
<rect x="873" y="630.500" width=".8" height="3" fill="#999"/>
<path d="M915 632h5M917.500 629.500v5" stroke="#555" stroke-width="1.300"/>
<text x="928" y="635" textLength="15.500" lengthAdjust="spacingAndGlyphs">76%</text>
<path d="M955.500 630v-3h4.500M955.500 634v3h4.500" fill="none" stroke="#666" stroke-width=".9"/>

<!-- caption -->
<rect x="262" y="602.500" width="430" height="38" fill="#fcfcfc"/>
<text class="d" x="279" y="622.500" textLength="402" lengthAdjust="spacingAndGlyphs" style="font-size:24.500px;fill:#444">PowerPoint Interface: Design Use</text>
<path d="M590 630h8M590 633h8M590 636h8M592 628l2-2 2 2" fill="none" stroke="#e6e6e6"/>
<text x="602" y="635" textLength="23" lengthAdjust="spacingAndGlyphs" style="fill:#e3e3e3">Notes</text>
<path d="M640 626h10v7h-7l-2 3v-3h-1z" fill="#e6e6e6"/>
<text x="653" y="635" textLength="40" lengthAdjust="spacingAndGlyphs" style="fill:#e3e3e3">Comments</text>
</svg>
</body></html>
